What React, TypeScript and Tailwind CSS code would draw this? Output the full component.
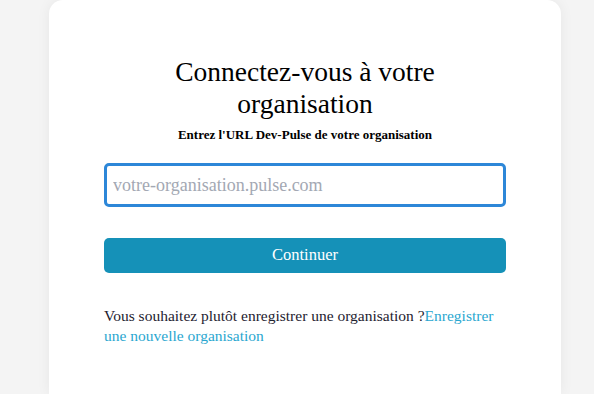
export default function App() {
  return (
    <div className="min-h-screen bg-[#f4f4f4] font-['Liberation_Serif',serif]">
      <div className="ml-[49px] w-[512px] min-h-[394px] rounded-t-[14px] bg-white px-[55px] pt-[56px] shadow-[0_0_14px_rgba(0,0,0,0.06)]">
        <h1 className="mx-auto max-w-[300px] text-center text-[27.5px] leading-[32px] text-black">
          Connectez-vous à votre organisation
        </h1>
        <p className="mt-[6px] text-center text-[13px] font-semibold leading-[18px] text-black">
          Entrez l'URL Dev-Pulse de votre organisation
        </p>
        <input
          autoFocus
          type="text"
          placeholder="votre-organisation.pulse.com"
          className="mt-[19px] block h-[44px] w-full rounded-[5px] border-[3px] border-[#2d87d8] px-[6px] text-[18px] text-gray-800 outline-none placeholder:text-[#a3a8b3]"
        />
        <button className="mt-[31px] block h-[35px] w-full rounded-[5px] bg-[#1591b8] text-[16.5px] text-white">
          Continuer
        </button>
        <p className="mt-[33px] text-[15.5px] leading-[20px] text-[#1e2230]">
          Vous souhaitez plutôt enregistrer une organisation ?
          <a href="#" className="text-[#2aa7d0]">
            Enregistrer une nouvelle organisation
          </a>
        </p>
      </div>
    </div>
  );
}
